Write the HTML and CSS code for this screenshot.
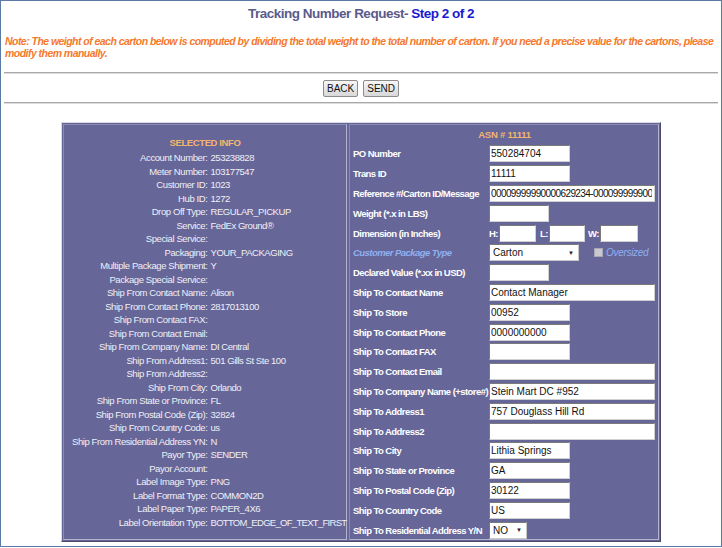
FILE: index.html
```html
<!DOCTYPE html>
<html>
<head>
<meta charset="utf-8">
<title>Tracking Number Request</title>
<link rel="stylesheet" href="styles.css">
</head>
<body>
<div class="frame">
  <h1 class="title">Tracking Number Request- <span class="step">Step 2 of 2</span></h1>
  <p class="note">Note: The weight of each carton below is computed by dividing the total weight to the total number of carton. If you need a precise value for the cartons, please modify them manually.</p>
  <hr class="rule rule-top">
  <div class="actions">
    <button class="btn" type="button">BACK</button>
    <button class="btn" type="button">SEND</button>
  </div>
  <hr class="rule">
  <div class="panel">
    <section class="info">
      <h2 class="head">SELECTED INFO</h2>
      <dl class="kv">
        <dt>Account Number:</dt><dd>253238828</dd>
        <dt>Meter Number:</dt><dd>103177547</dd>
        <dt>Customer ID:</dt><dd>1023</dd>
        <dt>Hub ID:</dt><dd>1272</dd>
        <dt>Drop Off Type:</dt><dd>REGULAR_PICKUP</dd>
        <dt>Service:</dt><dd>FedEx Ground®</dd>
        <dt>Special Service:</dt><dd></dd>
        <dt>Packaging:</dt><dd>YOUR_PACKAGING</dd>
        <dt>Multiple Package Shipment:</dt><dd>Y</dd>
        <dt>Package Special Service:</dt><dd></dd>
        <dt>Ship From Contact Name:</dt><dd>Alison</dd>
        <dt>Ship From Contact Phone:</dt><dd>2817013100</dd>
        <dt>Ship From Contact FAX:</dt><dd></dd>
        <dt>Ship From Contact Email:</dt><dd></dd>
        <dt>Ship From Company Name:</dt><dd>DI Central</dd>
        <dt>Ship From Address1:</dt><dd>501 Gills St Ste 100</dd>
        <dt>Ship From Address2:</dt><dd></dd>
        <dt>Ship From City:</dt><dd>Orlando</dd>
        <dt>Ship From State or Province:</dt><dd>FL</dd>
        <dt>Ship From Postal Code (Zip):</dt><dd>32824</dd>
        <dt>Ship From Country Code:</dt><dd>us</dd>
        <dt>Ship From Residential Address YN:</dt><dd>N</dd>
        <dt>Payor Type:</dt><dd>SENDER</dd>
        <dt>Payor Account:</dt><dd></dd>
        <dt>Label Image Type:</dt><dd>PNG</dd>
        <dt>Label Format Type:</dt><dd>COMMON2D</dd>
        <dt>Label Paper Type:</dt><dd>PAPER_4X6</dd>
        <dt>Label Orientation Type:</dt><dd class="dd-long">BOTTOM_EDGE_OF_TEXT_FIRST</dd>
      </dl>
    </section>
    <section class="asn">
      <h2 class="head head-asn">ASN # 11111</h2>
      <div class="form">
        <div class="row"><label class="lbl">PO Number</label><input class="fld fld-m" value="550284704"></div>
        <div class="row"><label class="lbl">Trans ID</label><input class="fld fld-m" value="11111"></div>
        <div class="row"><label class="lbl">Reference #/Carton ID/Message</label><input class="fld fld-l fld-tight" value="00009999990000629234-000099999900"></div>
        <div class="row"><label class="lbl">Weight (*.x in LBS)</label><input class="fld fld-s" value=""></div>
        <div class="row"><label class="lbl">Dimension (in Inches)</label>
          <div class="dims">
            <span class="dlbl dl-h">H:</span><input class="fld fld-d1" value="">
            <span class="dlbl dl-l">L:</span><input class="fld fld-d2" value="">
            <span class="dlbl dl-w">W:</span><input class="fld fld-d3" value="">
          </div>
        </div>
        <div class="row"><label class="lbl lbl-alt">Customer Package Type</label>
          <div class="pkg">
            <div class="sel sel-wide"><span>Carton</span><span class="arrow">&#9660;</span></div>
            <span class="chk"></span><span class="oversized">Oversized</span>
          </div>
        </div>
        <div class="row"><label class="lbl">Declared Value (*.xx in USD)</label><input class="fld fld-s" value=""></div>
        <div class="row"><label class="lbl">Ship To Contact Name</label><input class="fld fld-l" value="Contact Manager"></div>
        <div class="row"><label class="lbl">Ship To Store</label><input class="fld fld-m" value="00952"></div>
        <div class="row"><label class="lbl">Ship To Contact Phone</label><input class="fld fld-m" value="0000000000"></div>
        <div class="row"><label class="lbl">Ship To Contact FAX</label><input class="fld fld-m" value=""></div>
        <div class="row"><label class="lbl">Ship To Contact Email</label><input class="fld fld-l" value=""></div>
        <div class="row"><label class="lbl">Ship To Company Name (+store#)</label><input class="fld fld-l" value="Stein Mart DC #952"></div>
        <div class="row"><label class="lbl">Ship To Address1</label><input class="fld fld-l" value="757 Douglass Hill Rd"></div>
        <div class="row"><label class="lbl">Ship To Address2</label><input class="fld fld-l" value=""></div>
        <div class="row"><label class="lbl">Ship To City</label><input class="fld fld-m" value="Lithia Springs"></div>
        <div class="row"><label class="lbl">Ship To State or Province</label><input class="fld fld-m" value="GA"></div>
        <div class="row"><label class="lbl">Ship To Postal Code (Zip)</label><input class="fld fld-m" value="30122"></div>
        <div class="row"><label class="lbl">Ship To Country Code</label><input class="fld fld-m" value="US"></div>
        <div class="row"><label class="lbl">Ship To Residential Address Y/N</label>
          <div class="sel sel-small"><span>NO</span><span class="arrow">&#9660;</span></div>
        </div>
      </div>
    </section>
  </div>
</div>
</body>
</html>
```
FILE: styles.css
```css
* { box-sizing: border-box; }
html, body { margin: 0; padding: 0; background: #fff; }
body {
  font-family: "Liberation Sans", Arial, sans-serif;
}
.frame {
  width: 722px;
  height: 547px;
  border: 1px solid #5a7ca4;
  padding: 0 3px;
  overflow: hidden;
}
.title {
  margin: 4px 0 0;
  font-size: 13.5px;
  line-height: 18px;
  letter-spacing: -0.5px;
  font-weight: bold;
  text-align: center;
  color: #5a5a8c;
}
.step { color: #1a1ad0; }
.note {
  margin: 12px 0 0 1px;
  font-size: 10.5px;
  line-height: 12px;
  letter-spacing: -0.54px;
  font-weight: bold;
  font-style: italic;
  color: #f5792e;
}
.rule {
  margin: 0;
  border: 0;
  border-top: 1px solid #a8a8a8;
  border-bottom: 1px solid #dcdcdc;
  height: 0;
}
.rule-top { margin-top: 13px; }
.actions {
  display: flex;
  justify-content: center;
  gap: 5px;
  margin: 6px 0 5px;
}
.btn {
  font-family: inherit;
  font-size: 10px;
  height: 17px;
  line-height: 12px;
  padding: 0 3px;
  color: #111;
  background: linear-gradient(#f6f6f6, #d8d8d8);
  border: 1px solid #8c8c8c;
  border-radius: 2px;
}
.panel {
  width: 600px;
  margin: 18px auto 0;
  display: grid;
  grid-template-columns: 284px 310px;
  gap: 2px;
  padding: 1px;
  background: #666699;
  border: 1px solid;
  border-color: #d8d8e6 #4a4a66 #4a4a66 #d8d8e6;
}
.info, .asn {
  border: 1px solid;
  border-color: #8a8ab0 #b4b4d2 #b4b4d2 #8a8ab0;
  background: #666699;
  height: 416px;
}
.info { padding-top: 10px; }
.head {
  margin: 0;
  font-size: 9.5px;
  line-height: 16px;
  letter-spacing: -0.4px;
  font-weight: bold;
  text-align: center;
  color: #f3b56e;
}
.kv {
  margin: 0;
  display: grid;
  grid-template-columns: 142px 134px;
  justify-content: center;
  align-items: baseline;
  column-gap: 3px;
  font-size: 9.5px;
  line-height: 13.5px;
  color: #f0f0f6;
}
.kv dt {
  text-align: right;
  white-space: nowrap;
  letter-spacing: -0.4px;
}
.kv dd {
  margin: 0;
  white-space: nowrap;
  letter-spacing: -0.45px;
}
.kv .dd-long { letter-spacing: -0.7px; }
.asn { padding: 0 2px 0 3px; }
.head-asn { line-height: 19px; letter-spacing: -0.2px; }
.form { display: flex; flex-direction: column; }
.row {
  height: 19.8px;
  display: grid;
  grid-template-columns: 136px 1fr;
  align-items: center;
}
.lbl {
  font-size: 9.5px;
  letter-spacing: -0.55px;
  font-weight: bold;
  color: #fff;
  white-space: nowrap;
}
.lbl-alt { font-style: italic; color: #8fb0f0; }
.fld {
  height: 17px;
  font-family: inherit;
  font-size: 10px;
  color: #111;
  padding: 0 2px 0 1px;
  background: #fff;
  border: 1px solid;
  border-color: #7a7a7a #d0d0d0 #d0d0d0 #7a7a7a;
  margin: 0;
  outline: none;
}
.fld-tight { letter-spacing: -0.6px; }
.fld-m { width: 81px; }
.fld-l { width: 166px; }
.fld-s { width: 60px; }
.fld-d1 { width: 37px; }
.fld-d2 { width: 36px; }
.fld-d3 { width: 38px; }
.dims, .pkg { display: flex; align-items: center; }
.dlbl { font-size: 9.5px; letter-spacing: -0.5px; font-weight: bold; color: #fff; }
.dl-h { width: 10px; }
.dl-l { width: 9px; margin-left: 4px; }
.dl-w { width: 12px; margin-left: 3px; }
.sel {
  height: 17px;
  display: flex;
  align-items: center;
  justify-content: space-between;
  background: #fff;
  border: 1px solid;
  border-color: #7a7a7a #c8c8c8 #c8c8c8 #7a7a7a;
  font-size: 10px;
  color: #111;
  padding: 0 4px 0 3px;
}
.sel-wide { width: 90px; }
.sel-small { width: 38px; }
.arrow { font-size: 6px; color: #222; }
.chk {
  width: 9px;
  height: 9px;
  margin-left: 15px;
  background: #c8c8d0;
  border: 1px solid #a8a8b4;
}
.oversized {
  margin-left: 3px;
  font-size: 10px;
  letter-spacing: -0.3px;
  font-style: italic;
  color: #8fb0f0;
}
```
